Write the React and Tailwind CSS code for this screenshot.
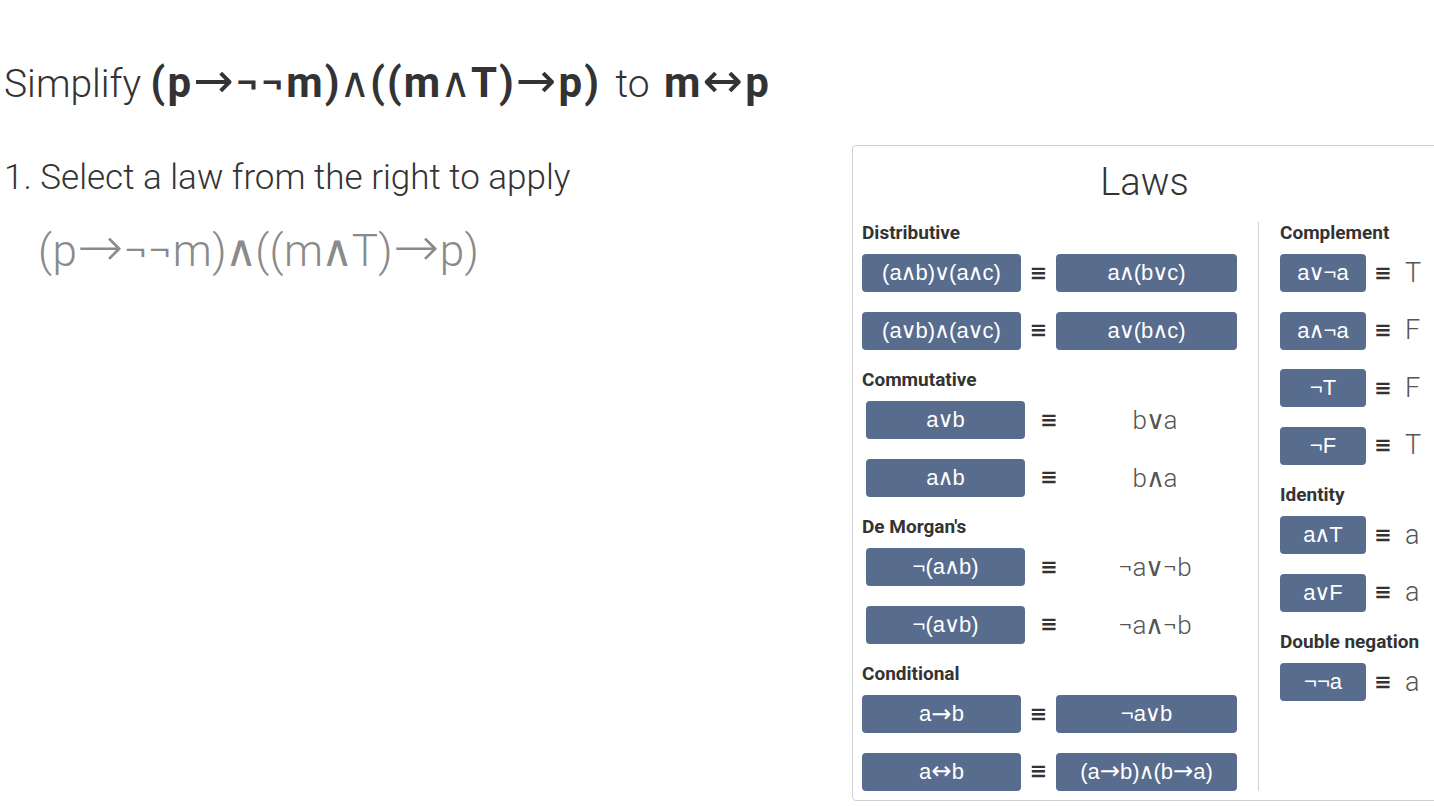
import React from "react";

const roboto = { fontFamily: '"Roboto", "Liberation Sans", sans-serif' };

// logic symbols come from DejaVu, the text fonts draw them too small or too heavy
function Formula({ text, symWeight = "font-normal", arrowSize = "text-[1.1em]" }) {
  const parts = [];
  let buf = "";
  for (const ch of text) {
    if ("→↔∧∨".includes(ch)) {
      if (buf) parts.push(buf);
      buf = "";
      const arrow = ch === "→" || ch === "↔";
      parts.push(
        <span
          key={parts.length}
          className={`font-['DejaVu_Sans',sans-serif] ${symWeight} leading-none ${
            arrow ? arrowSize : "mx-[-0.05em]"
          }`}
        >
          {ch}
        </span>
      );
    } else {
      buf += ch;
    }
  }
  if (buf) parts.push(buf);
  return <>{parts}</>;
}

function LawButton({ children, width }) {
  return (
    <div
      className={`${width} h-[38px] rounded-[4px] bg-[#586c8e] text-white text-[22px] leading-none flex items-center justify-center shrink-0 whitespace-nowrap font-['Liberation_Sans',Arial,sans-serif]`}
    >
      <Formula text={children} />
    </div>
  );
}

function Equiv({ width }) {
  return (
    <div className={`${width} shrink-0 text-center text-[21px] leading-none font-bold text-[#333] font-['DejaVu_Sans',sans-serif]`}>
      ≡
    </div>
  );
}

function Label({ children }) {
  return (
    <div className="h-[22px] leading-[22px] mb-[10px] text-[19px] font-bold text-[#333] whitespace-nowrap">
      {children}
    </div>
  );
}

// both sides are buttons
function PairRow({ left, right, last }) {
  return (
    <div className={`flex items-center h-[38px] ${last ? "" : "mb-[19.5px]"}`}>
      <LawButton width="w-[159px]">{left}</LawButton>
      <Equiv width="w-[35px]" />
      <LawButton width="w-[181px]">{right}</LawButton>
    </div>
  );
}

// right side is plain text
function TextRow({ left, right }) {
  return (
    <div className="flex items-center h-[38px] mb-[19.5px] pl-[4px]">
      <LawButton width="w-[159px]">{left}</LawButton>
      <Equiv width="w-[48px]" />
      <div className="flex-1 text-center text-[26px] leading-none font-light text-[#555]">
        <Formula text={right} symWeight="font-extralight" />
      </div>
    </div>
  );
}

function SmallRow({ left, right }) {
  return (
    <div className="flex items-center h-[38px] mb-[19.5px]">
      <LawButton width="w-[86px]">{left}</LawButton>
      <Equiv width="w-[34px]" />
      <div className="pl-[5px] text-[27px] leading-none font-light text-[#555]">{right}</div>
    </div>
  );
}

export default function App() {
  return (
    <div className="w-[1434px] h-[806px] overflow-hidden bg-white text-[#333]" style={roboto}>
      {/* Heading */}
      <h1 className="pt-[56px] pl-[4px] h-[48px] leading-[48px] text-[39px] font-light whitespace-nowrap box-content">
        Simplify{" "}
        <span className="font-bold text-[42px] tracking-[0.05em]">
          <Formula text="(p→¬¬m)∧((m∧T)→p)" arrowSize="text-[1.15em]" />
        </span>{" "}
        <span className="px-[5px]">to</span>{" "}
        <span className="font-bold text-[42px] tracking-[0.05em]">
          <Formula text="m↔p" arrowSize="text-[1.15em]" />
        </span>
      </h1>

      <div className="flex mt-[41px]">
        {/* Left: steps */}
        <div className="w-[852px] shrink-0 pl-[4px]">
          <div className="mt-[13px] text-[35px] leading-[40px] font-light whitespace-nowrap">
            1. Select a law from the right to apply
          </div>
          <div className="mt-[22px] pl-[34px] text-[44px] leading-[52px] font-light text-[#8a8a8a] tracking-[0.01em] whitespace-nowrap">
            <Formula text="(p→¬¬m)∧((m∧T)→p)" symWeight="font-extralight" arrowSize="text-[1.25em]" />
          </div>
        </div>

        {/* Right: laws panel */}
        <div className="w-[590px] shrink-0 border border-[#d0d0d0] rounded-[4px] pl-[9px] pb-[9px]">
          <div className="pt-[13px] h-[76px] text-center text-[38px] leading-[46px] font-light pr-[14px]">
            Laws
          </div>
          <div className="flex">
            <div className="w-[375px] shrink-0">
              <Label>Distributive</Label>
              <PairRow left="(a∧b)∨(a∧c)" right="a∧(b∨c)" />
              <PairRow left="(a∨b)∧(a∨c)" right="a∨(b∧c)" />
              <Label>Commutative</Label>
              <TextRow left="a∨b" right="b∨a" />
              <TextRow left="a∧b" right="b∧a" />
              <Label>De Morgan's</Label>
              <TextRow left="¬(a∧b)" right="¬a∨¬b" />
              <TextRow left="¬(a∨b)" right="¬a∧¬b" />
              <Label>Conditional</Label>
              <PairRow left="a→b" right="¬a∨b" />
              <PairRow left="a↔b" right="(a→b)∧(b→a)" last />
            </div>
            <div className="ml-[21px] w-px bg-[#d0d0d0] shrink-0" />
            <div className="pl-[21px] flex-1">
              <Label>Complement</Label>
              <SmallRow left="a∨¬a" right="T" />
              <SmallRow left="a∧¬a" right="F" />
              <SmallRow left="¬T" right="F" />
              <SmallRow left="¬F" right="T" />
              <Label>Identity</Label>
              <SmallRow left="a∧T" right="a" />
              <SmallRow left="a∨F" right="a" />
              <Label>Double negation</Label>
              <SmallRow left="¬¬a" right="a" />
            </div>
          </div>
        </div>
      </div>
    </div>
  );
}
